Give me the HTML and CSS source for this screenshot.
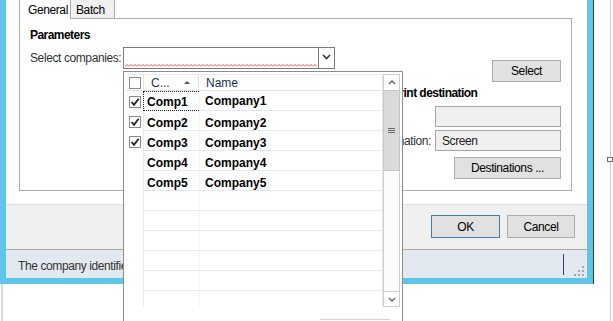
FILE: index.html
```html
<!DOCTYPE html>
<html lang="en">
<head>
    <meta charset="UTF-8">
    <title>Company selection</title>
    <link rel="stylesheet" href="styles.css">
</head>
<body>
    <div class="screen">
        <div class="desk-left">
            <div class="window">
                <div class="form">
                    <div class="tabs">
                        <div class="tab active">General</div>
                        <div class="tab">Batch</div>
                    </div>
                    <div class="tab-page">
                        <div class="params">
                            <div class="group-title">Parameters</div>
                            <div class="field">
                                <label class="field-label">Select companies:</label>
                                <div class="combo">
                                    <div class="combo-text">
                                        <svg class="squiggle" width="192" height="3">
                                            <defs>
                                                <pattern id="wave" width="4" height="3" patternUnits="userSpaceOnUse">
                                                    <path d="M0 2.5 L2 0.5 L4 2.5" stroke="#e8464b" stroke-width="1" fill="none"/>
                                                </pattern>
                                            </defs>
                                            <rect width="192" height="3" fill="url(#wave)"/>
                                        </svg>
                                    </div>
                                    <div class="combo-btn">
                                        <svg width="9" height="6" viewBox="0 0 9 6"><path d="M1 1 L4.5 4.5 L8 1" stroke="#3b3b3b" stroke-width="1.7" fill="none"/></svg>
                                    </div>
                                </div>
                            </div>
                        </div>
                        <div class="printing">
                            <button class="btn btn-select">Select</button>
                            <div class="group-title print-title">Print destination</div>
                            <div class="field print-field">
                                <label class="print-label"></label>
                                <div class="textbox"></div>
                            </div>
                            <div class="field print-field">
                                <label class="print-label">Destination:</label>
                                <div class="textbox">Screen</div>
                            </div>
                            <button class="btn btn-dest">Destinations ...</button>
                        </div>
                    </div>
                </div>
                <div class="button-bar">
                    <button class="btn btn-ok">OK</button>
                    <button class="btn btn-cancel">Cancel</button>
                </div>
                <div class="status-bar">
                    <span class="status-text">The company identifiers of the companies to include in the report.</span>
                    <span class="status-sep"></span>
                    <svg class="grip" width="11" height="11" viewBox="0 0 11 11">
                        <rect x="8" y="0" width="2" height="2" fill="#a3a8ae"/>
                        <rect x="4" y="4" width="2" height="2" fill="#a3a8ae"/>
                        <rect x="8" y="4" width="2" height="2" fill="#a3a8ae"/>
                        <rect x="0" y="8" width="2" height="2" fill="#a3a8ae"/>
                        <rect x="4" y="8" width="2" height="2" fill="#a3a8ae"/>
                        <rect x="8" y="8" width="2" height="2" fill="#a3a8ae"/>
                    </svg>
                </div>
            </div>
            <div class="below"></div>
        </div>
        <div class="backdrop">
            <div class="backdrop-edge"></div>
            <span class="backdrop-mark"></span>
        </div>

        <!-- company lookup dropped down from the combo box -->
        <div class="lookup">
            <div class="grid">
                <div class="grid-main">
                    <div class="grid-head">
                        <div class="c-check"><span class="checkbox"></span></div>
                        <div class="c-code">C...<span class="sort-up"></span></div>
                        <div class="c-name">Name</div>
                    </div>
                    <div class="grid-row first">
                        <div class="c-check"><span class="checkbox checked"><svg width="10" height="10" viewBox="0 0 10 10"><path d="M1.5 5 L4 7.8 L8.6 1.8" stroke="#222" stroke-width="1.8" fill="none"/></svg></span></div>
                        <div class="c-code focus">Comp1</div>
                        <div class="c-name">Company1</div>
                    </div>
                    <div class="grid-row">
                        <div class="c-check"><span class="checkbox checked"><svg width="10" height="10" viewBox="0 0 10 10"><path d="M1.5 5 L4 7.8 L8.6 1.8" stroke="#222" stroke-width="1.8" fill="none"/></svg></span></div>
                        <div class="c-code">Comp2</div>
                        <div class="c-name">Company2</div>
                    </div>
                    <div class="grid-row">
                        <div class="c-check"><span class="checkbox checked"><svg width="10" height="10" viewBox="0 0 10 10"><path d="M1.5 5 L4 7.8 L8.6 1.8" stroke="#222" stroke-width="1.8" fill="none"/></svg></span></div>
                        <div class="c-code">Comp3</div>
                        <div class="c-name">Company3</div>
                    </div>
                    <div class="grid-row">
                        <div class="c-check"></div>
                        <div class="c-code">Comp4</div>
                        <div class="c-name">Company4</div>
                    </div>
                    <div class="grid-row">
                        <div class="c-check"></div>
                        <div class="c-code">Comp5</div>
                        <div class="c-name">Company5</div>
                    </div>
                    <div class="grid-row"><div class="c-check"></div><div class="c-code"></div><div class="c-name"></div></div>
                    <div class="grid-row"><div class="c-check"></div><div class="c-code"></div><div class="c-name"></div></div>
                    <div class="grid-row"><div class="c-check"></div><div class="c-code"></div><div class="c-name"></div></div>
                    <div class="grid-row"><div class="c-check"></div><div class="c-code"></div><div class="c-name"></div></div>
                    <div class="grid-row"><div class="c-check"></div><div class="c-code"></div><div class="c-name"></div></div>
                    <div class="grid-row"><div class="c-check"></div><div class="c-code"></div><div class="c-name"></div></div>
                </div>
                <div class="vscroll">
                    <div class="arrow">
                        <svg width="8" height="5" viewBox="0 0 8 5"><path d="M1 4 L4 1 L7 4" stroke="#606060" stroke-width="1.3" fill="none"/></svg>
                    </div>
                    <div class="thumb"><span class="gripper"></span></div>
                    <div class="track"></div>
                    <div class="arrow arrow-down">
                        <svg width="8" height="5" viewBox="0 0 8 5"><path d="M1 1 L4 4 L7 1" stroke="#606060" stroke-width="1.3" fill="none"/></svg>
                    </div>
                </div>
            </div>
            <div class="lookup-footer">
                <span class="lookup-btn"></span>
            </div>
        </div>
    </div>
</body>
</html>
```

FILE: styles.css
```css
* {
    box-sizing: border-box;
}
body {
    margin: 0;
    font-family: "Liberation Sans", Arial, sans-serif;
    font-size: 12px;
    color: #000;
    background: #fff;
}
.screen {
    position: relative;
    width: 613px;
    height: 321px;
    overflow: hidden;
    display: flex;
}
.desk-left {
    display: flex;
    flex-direction: column;
    width: 594px;
}
.window {
    width: 593px;
    height: 284px;
    margin-right: 1px;
    display: flex;
    flex-direction: column;
    border-left: 6px solid #5fc6ea;
    border-right: 6px solid #5fc6ea;
    border-bottom: 6px solid #5fc6ea;
    box-shadow: 1px 0 0 #3a3a3a;
}
.below {
    flex: 1;
    margin-left: 1px;
    border-left: 2px solid #d3dbe5;
}

/* form with tabs */
.form {
    height: 204px;
    background: #fff;
    padding: 0 15px 0 13px;
    letter-spacing: -0.4px;
}
.tabs {
    display: flex;
    align-items: flex-end;
    height: 18px;
}
.tab {
    height: 18px;
    padding: 3px 0 0 8px;
    line-height: 14px;
    border: 1px solid #acacac;
    border-top: none;
    border-bottom: none;
    background: #f0f0f0;
    color: #000;
}
.tab.active {
    width: 52px;
    background: #fff;
    height: 19px;
    margin-bottom: -1px;
    position: relative;
}
.tab:not(.active) {
    width: 44px;
    padding-left: 5px;
    border-left: none;
}
.tab-page {
    height: 173px;
    border: 1px solid #acacac;
    display: flex;
    padding: 9px 10px 0 10px;
}
.params {
    flex: 1;
}
.group-title {
    font-weight: bold;
    line-height: 14px;
    letter-spacing: -0.55px;
}
.field {
    display: flex;
    align-items: center;
}
.params .field {
    margin-top: 5px;
}
.field-label {
    width: 93px;
    line-height: 14px;
    color: #333;
}
.combo {
    width: 212px;
    height: 22px;
    border: 1px solid #7a7a7a;
    display: flex;
    background: #fff;
}
.combo-text {
    flex: 1;
    position: relative;
}
.squiggle {
    position: absolute;
    left: 1px;
    top: 16px;
}
.combo-btn {
    width: 16px;
    border-left: 1px solid #7a7a7a;
    display: flex;
    align-items: center;
    justify-content: center;
    padding-bottom: 2px;
}
.printing {
    width: 171px;
    padding-top: 32px;
    display: flex;
    flex-direction: column;
    align-items: flex-end;
}
.print-title {
    align-self: stretch;
    margin-top: 4px;
    padding-left: 2px;
    white-space: nowrap;
}
.print-field {
    align-self: stretch;
    margin-top: 6px;
}
.print-field + .print-field {
    margin-top: 3px;
}
.print-label {
    flex: 1;
    min-width: 0;
    display: flex;
    justify-content: flex-end;
    white-space: nowrap;
    padding-right: 4px;
    line-height: 14px;
    color: #333;
}
.textbox {
    flex: none;
    width: 126px;
    height: 21px;
    border: 1px solid #a6a6a6;
    background: #f0f0f0;
    padding: 3px 0 0 6px;
    line-height: 14px;
    color: #222;
}
.btn {
    font-family: inherit;
    font-size: 12px;
    letter-spacing: -0.4px;
    color: #000;
    background: #e1e1e1;
    border: 1px solid #adadad;
    padding: 0;
    height: 23px;
}
.btn-select {
    width: 69px;
    height: 22px;
}
.btn-dest {
    width: 107px;
    height: 22px;
    margin-top: 6px;
}

/* OK / Cancel */
.button-bar {
    height: 45px;
    background: #f0f0f0;
    border-top: 1px solid #dfdfdf;
    display: flex;
    justify-content: flex-end;
    gap: 7px;
    padding: 10px 12px 0 0;
}
.btn-ok {
    width: 69px;
    border-color: #3c7fb1;
}
.btn-cancel {
    width: 68px;
}
.status-bar {
    flex: 1;
    background: #e3e9f1;
    border-top: 1px solid #a8a8a8;
    display: flex;
    align-items: center;
    padding: 0 2px 0 12px;
    letter-spacing: -0.4px;
}
.status-text {
    flex: 1;
    color: #333;
    white-space: nowrap;
    overflow: hidden;
    padding-top: 3px;
}
.status-sep {
    width: 1px;
    height: 21px;
    background: #26456e;
    margin: 0 10px 0 6px;
}
.grip {
    align-self: flex-end;
    margin-bottom: 1px;
}

/* desktop behind the dialog */
.backdrop {
    flex: 1;
    display: flex;
    justify-content: flex-end;
    padding-right: 2px;
    position: relative;
}
.backdrop-edge {
    width: 1px;
    background: #c5ccd5;
}
.backdrop-mark {
    position: absolute;
    left: 13px;
    top: 157px;
    width: 6px;
    height: 5px;
    border: 1px solid #6b6b6b;
    background: #fff;
}

/* lookup popup */
.lookup {
    position: absolute;
    left: 123px;
    top: 71px;
    width: 280px;
    height: 260px;
    background: #fff;
    border: 1px solid #8d8d8d;
    padding: 2px 2px 0 2px;
}
.grid {
    display: flex;
    height: 233px;
}
.grid-main {
    width: 257px;
    overflow: hidden;
}
.grid-head {
    display: flex;
    height: 17px;
    border-top: 1px solid #e8e8e8;
    border-bottom: 1px solid #e2e2e2;
    color: #1c3150;
}
.grid-head .c-code,
.grid-head .c-name {
    padding: 1px 0 0 7px;
    line-height: 14px;
}
.grid-head .c-code {
    display: flex;
    align-items: flex-start;
    justify-content: space-between;
    border-left: 1px solid #e2e2e2;
    border-right: 1px solid #e2e2e2;
}
.sort-up {
    width: 0;
    height: 0;
    margin: 5px 8px 0 0;
    border-left: 3px solid transparent;
    border-right: 3px solid transparent;
    border-bottom: 3px solid #555;
}
.c-check {
    width: 17px;
    flex: none;
    padding: 2px 0 0 3px;
}
.c-code {
    width: 56px;
    flex: none;
}
.c-name {
    flex: 1;
    border-right: 1px solid #e6ebf2;
}
.checkbox {
    display: block;
    width: 12px;
    height: 12px;
    border: 1px solid #8a8a8a;
    background: #fff;
}
.checkbox.checked svg {
    display: block;
}
.grid-row {
    display: flex;
    height: 20px;
    font-weight: bold;
}
.grid-row .c-check {
    padding-top: 5px;
}
.grid-row .c-code,
.grid-row .c-name {
    border-bottom: 1px solid #e1e8f1;
    line-height: 14px;
    padding-top: 5px;
}
.grid-row .c-code {
    padding-left: 3px;
    border-left: 1px solid #e6ebf2;
}
.grid-row .c-name {
    padding-left: 5px;
    border-left: 1px solid #f1f4f8;
}
.grid-row.first .c-code,
.grid-row.first .c-name {
    padding-top: 3px;
}
.c-code.focus {
    border: 1px dotted #222;
    border-right: none;
}
.vscroll {
    width: 17px;
    display: flex;
    flex-direction: column;
    border: 1px solid #cdcdcd;
    background: #fbfbfb;
}
.arrow {
    height: 15px;
    display: flex;
    align-items: center;
    justify-content: center;
    background: #fff;
}
.arrow-down {
    border-top: 1px solid #cdcdcd;
}
.thumb {
    height: 81px;
    background: #dadada;
    border: 1px solid #c6c6c6;
    margin: 0 -1px;
    display: flex;
    align-items: center;
    justify-content: center;
}
.gripper {
    width: 7px;
    height: 5px;
    border-top: 1px solid #6a6a6a;
    border-bottom: 1px solid #6a6a6a;
    background: linear-gradient(#6a6a6a, #6a6a6a) center / 7px 1px no-repeat;
}
.track {
    flex: 1;
}
.lookup-footer {
    display: flex;
    justify-content: flex-end;
    padding: 12px 10px 0 0;
    background: #fff;
    height: 30px;
}
.lookup-btn {
    width: 70px;
    height: 10px;
    border-top: 1px solid #d3d3d3;
}
```
